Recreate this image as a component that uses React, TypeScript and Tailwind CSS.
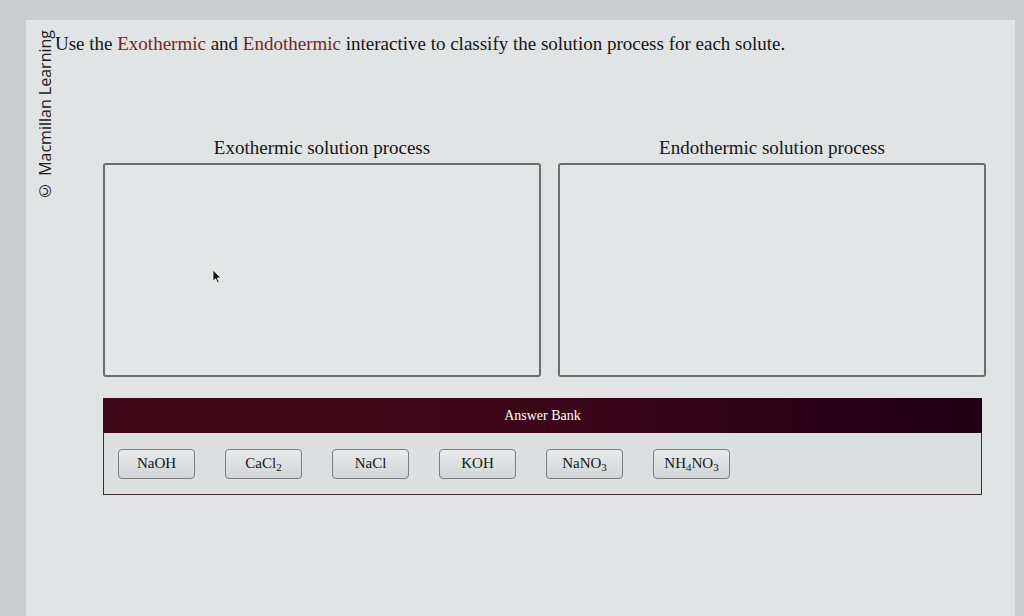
import React from 'react';

const serif = { fontFamily: '"Liberation Serif", "Times New Roman", serif' };

const solutes: { key: string; node: React.ReactNode }[] = [
  { key: 'NaOH', node: <>NaOH</> },
  { key: 'CaCl2', node: <>CaCl<sub className="text-[11px]">2</sub></> },
  { key: 'NaCl', node: <>NaCl</> },
  { key: 'KOH', node: <>KOH</> },
  { key: 'NaNO3', node: <>NaNO<sub className="text-[11px]">3</sub></> },
  { key: 'NH4NO3', node: <>NH<sub className="text-[11px]">4</sub>NO<sub className="text-[11px]">3</sub></> },
];

function DropZone({ label }: { label: string }) {
  return (
    <div className="flex flex-col items-center">
      <div className="text-[19px] leading-[22px] text-[#161616] mb-[4px]" style={serif}>
        {label}
      </div>
      <div className="w-full h-[214px] rounded-[3px] border-2 border-[#6e6c6e] bg-[#e3e6e7]" />
    </div>
  );
}

export default function App() {
  return (
    <div className="w-[1024px] h-[616px] overflow-hidden bg-[#c9cdcf] pt-[20px] pl-[26px] pr-[9px]">
      <div className="relative h-full bg-[#e1e4e5] flex">
        {/* side credit */}
        <div className="w-[29px] shrink-0 flex justify-center pl-[8px] pt-[10px]">
          <div
            className="[writing-mode:vertical-rl] rotate-180 whitespace-nowrap text-[16px] leading-[18px] text-[#1c1c1c] self-start"
            style={{ fontFamily: '"Open Sans", sans-serif' }}
          >
            © Macmillan Learning
          </div>
        </div>

        <div className="flex-1 pr-[29px]">
          <p className="mt-[12px] text-[19px] leading-[24px] text-[#151515]" style={serif}>
            Use the <span className="text-[#7b2416]">Exothermic</span> and{' '}
            <span className="text-[#7b2416]">Endothermic</span> interactive to classify the solution process for each
            solute.
          </p>

          <div className="ml-[48px] mt-[81px] grid grid-cols-[438px_428px] gap-[17px]">
            <DropZone label="Exothermic solution process" />
            <DropZone label="Endothermic solution process" />
          </div>

          {/* answer bank */}
          <div className="ml-[48px] mt-[21px] w-[879px]" style={serif}>
            <div className="h-[35px] flex items-center justify-center bg-gradient-to-r from-[#3e0918] via-[#3a0617] to-[#210013] text-white text-[14px]">
              Answer Bank
            </div>
            <div className="h-[62px] bg-[#dcdfe0] border border-t-0 border-[#3d2c32] flex items-center gap-[30px] pl-[14px]">
              {solutes.map(s => (
                <div
                  key={s.key}
                  className="w-[77px] h-[30px] flex items-center justify-center rounded-[4px] border border-[#7d7d7f] bg-gradient-to-b from-[#e8eaeb] to-[#d2d5d6] text-[15px] text-[#151515] leading-none"
                >
                  <span>{s.node}</span>
                </div>
              ))}
            </div>
          </div>
        </div>

        {/* mouse pointer */}
        <svg className="absolute left-[186px] top-[249px]" width="10" height="15" viewBox="0 0 10 15">
          <path d="M1 1 L1 12 L3.6 9.6 L5.6 14 L7.2 13.2 L5.3 9 L8.8 9 Z" fill="#111" stroke="#f2f2f2" strokeWidth="0.8" />
        </svg>
      </div>
    </div>
  );
}
